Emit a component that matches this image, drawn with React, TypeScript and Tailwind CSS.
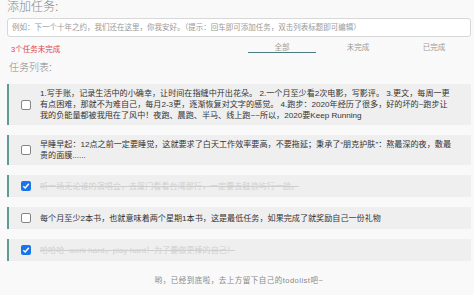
import React from "react";

const items = [
  {
    text: "1.写手账，记录生活中的小确幸，让时间在指缝中开出花朵。 2.一个月至少看2次电影，写影评。 3.更文，每周一更有点困难，那就不为难自己，每月2-3更，逐渐恢复对文字的感觉。 4.跑步：2020年经历了很多，好的坏的~跑步让我的负能量都被我甩在了风中！夜跑、晨跑、半马、线上跑~~所以，2020要Keep Running",
    done: false,
  },
  {
    text: "早睡早起：12点之前一定要睡觉，这就要求了白天工作效率要高，不要拖延；秉承了“朋克护肤”：熬最深的夜，敷最贵的面膜......",
    done: false,
  },
  {
    text: "听一场无论谁的演唱会，去厦门看看台湾那行，一定要去鼓浪屿行一趟。",
    done: true,
  },
  {
    text: "每个月至少2本书，也就意味着两个星期1本书，这是最低任务，如果完成了就奖励自己一份礼物",
    done: false,
  },
  {
    text: "哈哈哈~work hard，play hard！为了要做更棒的自己！",
    done: true,
  },
];

function Check({ checked }: { checked: boolean }) {
  if (checked) {
    return (
      <div className="w-[10px] h-[10px] rounded-[2px] bg-[#1a73e8] flex items-center justify-center shrink-0">
        <svg width="8" height="8" viewBox="0 0 8 8">
          <path d="M1.3 4.2 L3.2 6 L6.8 1.8" stroke="white" strokeWidth="1.5" fill="none" />
        </svg>
      </div>
    );
  }
  return <div className="w-[10px] h-[10px] rounded-[2px] border border-[#858585] bg-white shrink-0" />;
}

export default function App() {
  return (
    <div
      className="w-[474px] h-[295px] overflow-hidden bg-[#f9f9f9] pl-[7px] pr-[3px]"
      style={{ fontFamily: '"Liberation Sans", "Noto Sans CJK SC", sans-serif' }}
    >
      <div className="text-[12px] leading-[14px] text-[#888] pt-[0px] font-light">添加任务:</div>
      <div className="mt-[4px] h-[19px] border border-[#d8d8d8] rounded-[3px] bg-white flex items-center px-[4px]">
        <span className="text-[7.5px] text-[#999] whitespace-nowrap">
          例如：下一个十年之约，我们还在这里，你我安好。（提示：回车即可添加任务，双击列表标题即可编辑）
        </span>
      </div>
      <div className="flex items-start mt-[5px] h-[14px]">
        <div className="text-[7.5px] text-[#e0443e] pl-[4px] pt-[2px]">3个任务未完成</div>
        <div className="ml-auto flex w-[230px] mr-[-3px]">
          <div className="w-[76px] text-center text-[7.5px] text-[#999]">
            <div className="mx-[4px] h-[11px] border-b-[1.5px] border-[#4c7a83]">全部</div>
          </div>
          <div className="w-[76px] text-center text-[7.5px] text-[#999]">未完成</div>
          <div className="w-[76px] text-center text-[7.5px] text-[#999]">已完成</div>
        </div>
      </div>
      <div className="text-[10px] leading-[12px] text-[#888] mt-[6px] pl-[2px] font-light">任务列表:</div>
      <div className="mt-[10px] flex flex-col gap-[10px]">
        {items.map((it, i) => (
          <div
            key={i}
            className="flex items-center bg-[#efefef] border-l-[2px] border-[#5f9a96] min-h-[22px] py-[4px]"
          >
            <div className="w-[31px] flex justify-center pl-[2px] shrink-0">
              <Check checked={it.done} />
            </div>
            <div
              className={
                "text-[8.1px] leading-[11px] pr-[18px] " +
                (it.done ? "text-[#cfcfcf] line-through" : "text-[#333]")
              }
            >
              {it.text}
            </div>
          </div>
        ))}
      </div>
      <div className="mt-[14px] text-center text-[7.5px] text-[#888] tracking-[0.5px]">
        哟，已经到底啦，去上方留下自己的todolist吧~
      </div>
    </div>
  );
}
